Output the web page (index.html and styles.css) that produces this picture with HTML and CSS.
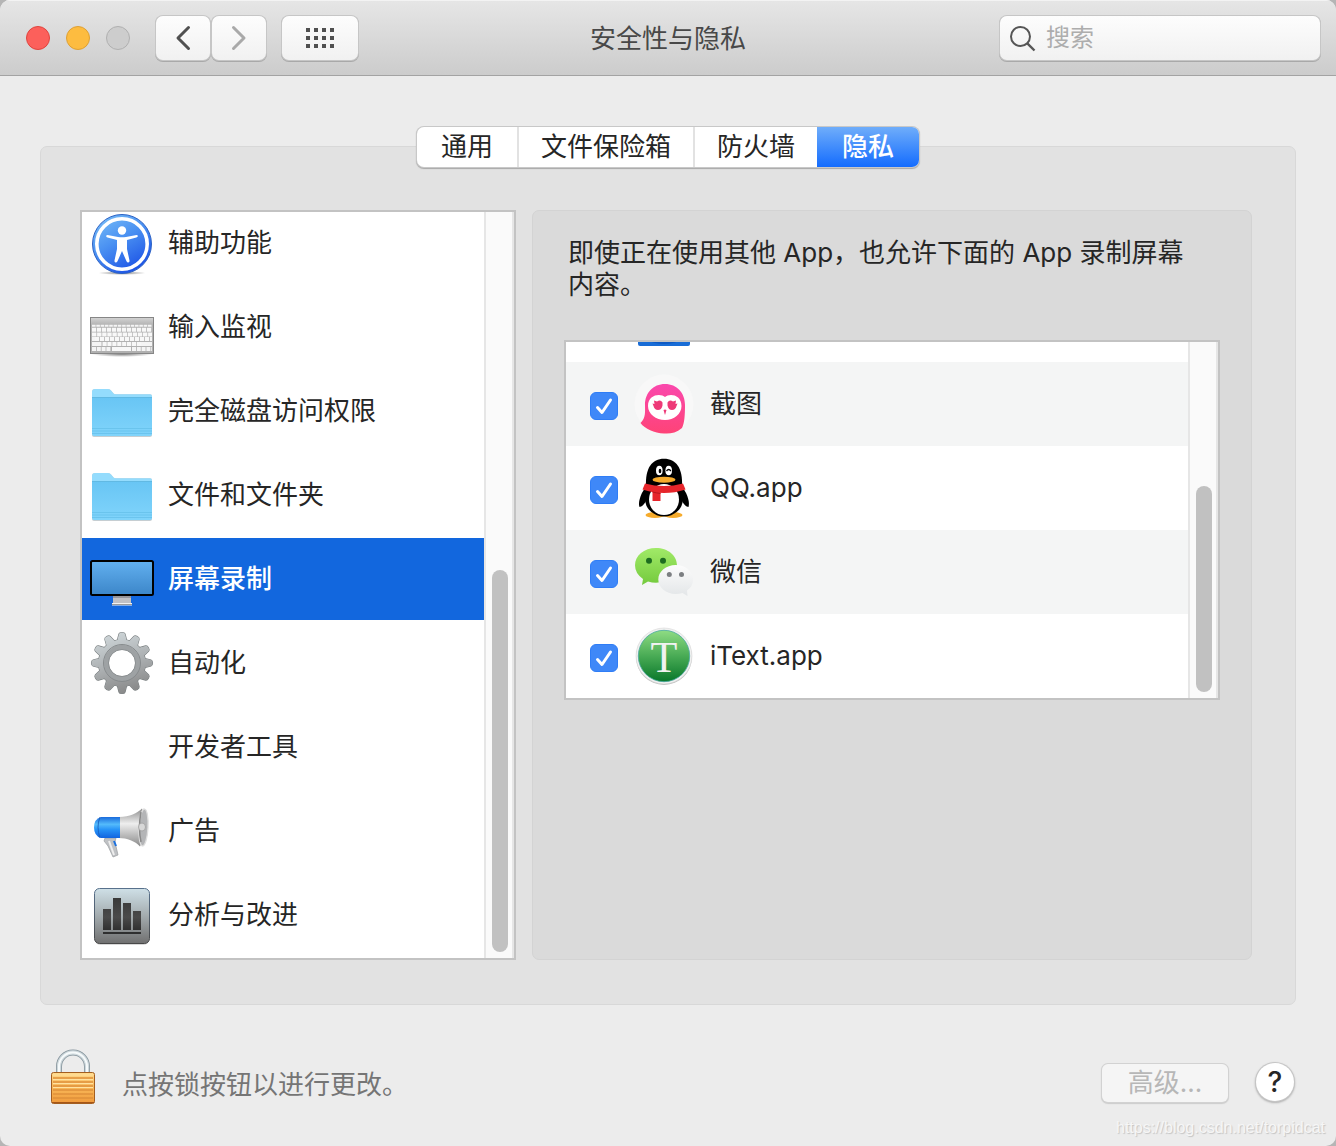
FILE: index.html
```html
<!DOCTYPE html>
<html lang="zh-CN">
<head>
<meta charset="utf-8">
<meta name="viewport" content="width=device-width, initial-scale=1">
<title>安全性与隐私</title>
<link rel="stylesheet" href="styles.css">
</head>
<body>
<div class="window">
  <header class="toolbar">
    <div class="toolbar-left">
      <div class="lights">
        <button class="light light-close" aria-label="关闭"></button>
        <button class="light light-min" aria-label="最小化"></button>
        <button class="light light-off" aria-label="缩放" disabled></button>
      </div>
      <div class="nav">
        <button class="tool" aria-label="后退"><svg width="54" height="44" viewBox="0 0 54 44"><path d="M32.500 11.500 22 22 32.500 32.500" fill="none" stroke="#505050" stroke-width="3" stroke-linecap="round" stroke-linejoin="round"/></svg></button>
        <button class="tool" aria-label="前进" disabled><svg width="54" height="44" viewBox="0 0 54 44"><path d="M21.500 11.500 32 22 21.500 32.500" fill="none" stroke="#a9a9a9" stroke-width="3" stroke-linecap="round" stroke-linejoin="round"/></svg></button>
      </div>
      <button class="tool tool-wide" aria-label="显示全部"><svg width="28" height="20" viewBox="0 0 28 20"><path d="M0 2h28M0 10h28M0 18h28" stroke="#505050" stroke-width="4" stroke-dasharray="4 4"/></svg></button>
    </div>
    <h1 class="title">安全性与隐私</h1>
    <label class="search">
      <svg width="26" height="26" viewBox="0 0 26 26" fill="none" stroke="#565656" stroke-width="2"><circle cx="10.500" cy="10.500" r="9.500"/><path d="M17.300 17.300 24.500 24.500" stroke-width="2.400"/></svg>
      <input type="search" placeholder="搜索" aria-label="搜索">
    </label>
  </header>

  <main class="content">
    <div class="tabs" role="tablist">
      <button class="tab" role="tab">通用</button>
      <button class="tab" role="tab">文件保险箱</button>
      <button class="tab" role="tab">防火墙</button>
      <button class="tab tab-active" role="tab" aria-selected="true">隐私</button>
    </div>

    <section class="panel">
      <div class="scrollbox categories">
        <ul class="category-list">
          <li class="category">
            <svg width="64" height="64" viewBox="0 0 64 64">
              <defs>
                <linearGradient id="acc" x1="0" y1="0" x2=".6" y2="1"><stop offset="0" stop-color="#7fc4f8"/><stop offset=".5" stop-color="#4b92f2"/><stop offset="1" stop-color="#1e55e6"/></linearGradient>
                <radialGradient id="shade"><stop offset="0" stop-color="#000" stop-opacity=".5"/><stop offset="1" stop-color="#000" stop-opacity="0"/></radialGradient>
              </defs>
              <ellipse cx="32" cy="62" rx="24" ry="2" fill="url(#shade)"/>
              <circle cx="32" cy="33" r="29.500" fill="url(#acc)" stroke="#2d62c4"/>
              <circle cx="32" cy="33" r="25.200" fill="none" stroke="#fff" stroke-width="3.600"/>
              <circle cx="32" cy="19.500" r="4.200" fill="#fff"/>
              <path d="M17.500 24 28 26q4 .7 8 0l10.500-2q1.500 0 1.300 1.300-.2 1-1.500 1.300L37 29v9l2.500 11.500q.2 1.800-1.200 2-1.200.1-1.800-1.300L32 40l-4.500 10.200q-.8 1.400-2 1.200-1.200-.4-1-1.900L27 38v-9l-9.500-2.500q-1.300-.5-1.300-1.300 0-1.200 1.300-1.200z" fill="#fff"/>
            </svg>
            <span>辅助功能</span>
          </li>
          <li class="category">
            <svg width="64" height="64" viewBox="0 0 64 64">
              <defs><linearGradient id="kb" x2="0" y2="1"><stop offset="0" stop-color="#d4d4d4"/><stop offset=".2" stop-color="#b4b4b4"/><stop offset="1" stop-color="#b0b0b0"/></linearGradient></defs>
              <ellipse cx="32" cy="59" rx="31" ry="3" fill="url(#shade)"/>
              <rect x=".5" y="22.500" width="63" height="36" fill="url(#kb)" stroke="#868686"/>
              <path d="M2 30.800h60" stroke="#f5f5f5" stroke-width="2" stroke-dasharray="3.600 .7"/>
              <path d="M2 34.700h60M5 44h55" stroke="#f8f8f8" stroke-width="4" stroke-dasharray="4.200 .8"/>
              <path d="M2 39.500h60" stroke="#f8f8f8" stroke-width="4" stroke-dasharray="4.400 .7"/>
              <path d="M2 44h3M60 44h2M2 49h9.500M51 49h11" stroke="#f5f5f5" stroke-width="4"/>
              <path d="M12.500 49H51" stroke="#f8f8f8" stroke-width="4" stroke-dasharray="4.200 .7"/>
              <path d="M2 54h19M42 54h20" stroke="#f5f5f5" stroke-width="4" stroke-dasharray="4 .8"/>
              <path d="M22 54h19" stroke="#f8f8f8" stroke-width="4"/>
            </svg>
            <span>输入监视</span>
          </li>
          <li class="category">
            <svg width="64" height="64" viewBox="0 0 64 64">
              <defs>
                <linearGradient id="fold" x2="0" y2="1"><stop offset="0" stop-color="#68c5f4"/><stop offset="1" stop-color="#80d4fb"/></linearGradient>
                <g id="folder">
                  <path d="M2 13q0-3 3-3h13q2 0 3.500 2l2 2.500q.8.700 2 .700H60q2 0 2 2V56q0 2-2 2H4q-2 0-2-2z" fill="#8e9ea6" opacity=".5"/>
                  <path d="M2 13q0-3 3-3h13q2 0 3.500 2l2 2.500q.8.700 2 .700H60q2 0 2 2V50H2z" fill="#94dcfd"/>
                  <path d="M2 18h60v37q0 2-2 2H4q-2 0-2-2z" fill="url(#fold)"/>
                  <path d="M2 18.500h60" stroke="#61b9e3"/>
                  <path d="M2 49.500h60M2 52h60M2 54.500h60" stroke="#63bfe9" opacity=".7"/>
                </g>
              </defs>
              <use href="#folder"/>
            </svg>
            <span>完全磁盘访问权限</span>
          </li>
          <li class="category">
            <svg width="64" height="64" viewBox="0 0 64 64"><use href="#folder"/></svg>
            <span>文件和文件夹</span>
          </li>
          <li class="category category-selected" aria-current="true">
            <svg width="64" height="64" viewBox="0 0 64 64">
              <defs><linearGradient id="scr" x2="0" y2="1"><stop offset="0" stop-color="#62b0ef"/><stop offset="1" stop-color="#3c86c9"/></linearGradient></defs>
              <path d="M23 48h18v8H23z" fill="#c0c0c4"/><path d="M23 49h18v2H23z" fill="#96969c"/>
              <path d="M22 56h20v2.500H22z" fill="#f2f2f2"/><path d="M22 57.500h20" stroke="#9a9a9a"/>
              <rect x="1" y="14" width="62" height="34" rx="1.500" fill="url(#scr)" stroke="#000" stroke-width="2"/>
            </svg>
            <span>屏幕录制</span>
          </li>
          <li class="category">
            <svg width="64" height="64" viewBox="0 0 64 64">
              <defs>
                <linearGradient id="gear" gradientUnits="userSpaceOnUse" x1="20" y1="0" x2="40" y2="64"><stop offset="0" stop-color="#d0d8db"/><stop offset=".5" stop-color="#adb1b3"/><stop offset="1" stop-color="#858585"/></linearGradient>
                <path id="tooth" d="M27 11 29 3q.4-1.500 3-1.500T35 3L37 11z"/>
                <g id="teeth"><use href="#tooth"/><use href="#tooth" transform="rotate(30 32 32)"/><use href="#tooth" transform="rotate(60 32 32)"/><use href="#tooth" transform="rotate(90 32 32)"/><use href="#tooth" transform="rotate(120 32 32)"/><use href="#tooth" transform="rotate(150 32 32)"/><use href="#tooth" transform="rotate(180 32 32)"/><use href="#tooth" transform="rotate(210 32 32)"/><use href="#tooth" transform="rotate(240 32 32)"/><use href="#tooth" transform="rotate(270 32 32)"/><use href="#tooth" transform="rotate(300 32 32)"/><use href="#tooth" transform="rotate(330 32 32)"/></g>
                <mask id="gearmask"><g fill="#fff"><use href="#teeth"/><circle cx="32" cy="32" r="23.500"/></g><circle cx="32" cy="32" r="13" fill="#000"/></mask>
              </defs>
              <g fill="none" stroke="#7b8082" stroke-width="1.200"><use href="#teeth"/><circle cx="32" cy="32" r="23.500"/></g>
              <rect width="64" height="64" fill="url(#gear)" mask="url(#gearmask)"/>
              <circle cx="32" cy="32" r="13" fill="#fff"/>
              <circle cx="32" cy="32" r="15.700" fill="none" stroke="#9ea2a4" stroke-width="4.500"/>
              <circle cx="32" cy="32" r="18.500" fill="none" stroke="#878b8d"/>
              <circle cx="32" cy="32" r="13.500" fill="none" stroke="#8b8f91"/>
            </svg>
            <span>自动化</span>
          </li>
          <li class="category">
            <svg width="64" height="64" viewBox="0 0 64 64" aria-hidden="true"></svg>
            <span>开发者工具</span>
          </li>
          <li class="category">
            <svg width="64" height="64" viewBox="0 0 64 64">
              <defs>
                <linearGradient id="mb" x2="0" y2="1"><stop offset="0" stop-color="#1a6bdc"/><stop offset=".35" stop-color="#54bbfb"/><stop offset=".6" stop-color="#2793f7"/><stop offset="1" stop-color="#1264df"/></linearGradient>
                <linearGradient id="ms" x2="0" y2="1"><stop offset="0" stop-color="#8d8d8d"/><stop offset=".4" stop-color="#eee"/><stop offset=".7" stop-color="#bbb"/><stop offset="1" stop-color="#8a8a8a"/></linearGradient>
              </defs>
              <path d="M15 39h11l-1 4 3 13-5 2-5-11-4-5z" fill="#bfc1c4" stroke="#9b9da0" stroke-width=".7"/>
              <path d="m19 42 5 14" stroke="#eee" stroke-width="2"/><path d="m24 42 2 5" stroke="#1970e0" stroke-width="2"/>
              <path d="M29 18c11 0 18-4 23-8.500q4 9 3.500 19T50 47.500C45 42 37 39 29 39z" fill="url(#ms)"/>
              <ellipse cx="53.500" cy="28.500" rx="4.500" ry="18.500" transform="rotate(3 53.500 28.500)" fill="#b4b5b7" stroke="#dedede" stroke-width="1.300"/>
              <path d="M51 13q-3 16 0 30" fill="none" stroke="#898989" stroke-width="1.500"/>
              <ellipse cx="52" cy="28" rx="3.500" ry="4" fill="#d8d8d8" stroke="#999" stroke-width=".7"/>
              <path d="M11 18h19v21H11q-7-2-7-10.500T11 18z" fill="url(#mb)"/>
              <path d="M10 18q-4 10 0 21" fill="none" stroke="#1759b8" stroke-width=".8"/>
            </svg>
            <span>广告</span>
          </li>
          <li class="category">
            <svg width="64" height="64" viewBox="0 0 64 64">
              <defs>
                <linearGradient id="an" x2="0" y2="1"><stop offset="0" stop-color="#cfe0e7"/><stop offset=".5" stop-color="#a3abae"/><stop offset="1" stop-color="#707070"/></linearGradient>
                <linearGradient id="bar" x2="0" y2="1"><stop offset="0" stop-color="#393939"/><stop offset=".6" stop-color="#4a4a4a"/><stop offset="1" stop-color="#303030"/></linearGradient>
                <linearGradient id="anb" x2="0" y2="1"><stop offset="0" stop-color="#58718c"/><stop offset="1" stop-color="#484848"/></linearGradient>
              </defs>
              <rect x="5" y="6" width="54" height="56" rx="5" fill="#000" opacity=".15"/>
              <rect x="4.500" y="5.500" width="55" height="55" rx="5" fill="url(#an)" stroke="url(#anb)"/>
              <path d="M13 26h8v21h-8zM23 15h8v32h-8zM33 20h8v27h-8zM43 28h8v19h-8z" fill="url(#bar)"/>
              <path d="M13 50h38" stroke="#2f2f2f" stroke-width="2"/>
            </svg>
            <span>分析与改进</span>
          </li>
        </ul>
        <div class="track"><div class="thumb" style="height:52%"></div></div>
      </div>

      <div class="detail">
        <p class="explain">即使正在使用其他 App，也允许下面的 App 录制屏幕内容。</p>
        <div class="scrollbox apps">
          <ul class="app-list">
            <li class="app"><svg class="app-first" width="60" height="60" viewBox="0 0 60 60"><rect x="4" y="4" width="52" height="52" rx="2" fill="#186cd6"/><ellipse cx="30" cy="50" rx="14" ry="4" fill="#0d5ac4"/></svg></li>
            <li class="app"><label class="app-label">
              <span class="check"><input type="checkbox" checked><svg width="28" height="28" viewBox="0 0 28 28"><path d="M7.500 15.500 12 20.500 20.500 8"/></svg></span>
              <svg width="60" height="60" viewBox="0 0 60 60">
                <defs><linearGradient id="pk" x2="0" y2="1"><stop offset="0" stop-color="#fa48ad"/><stop offset="1" stop-color="#fe4377"/></linearGradient></defs>
                <circle cx="30" cy="30" r="29.500" fill="#f8f8f8"/>
                <path d="M31 10c12 0 20 9 20 21 0 10-.5 18-3 23-6 5-12 6-18 5.500C20 59 11 55 6.500 49 12 44 11 37 11 31c0-12 8-21 20-21z" fill="url(#pk)"/>
                <path d="M31 23c4-4 16.500-3 16.500 9 0 8-7.500 14-16.500 14s-17-6-17-14c0-12 13-13 17-9z" fill="#fff"/>
                <g fill="#ee3a78"><path d="M20 26.500l3 1q3.500-2.500 5.500 1v3q-1 4.500-4.500 4.500t-4.500-4l-1-2.500 2 .500zM42 26.500l-3 1q-3.500-2.500-5.500 1v3q1 4.500 4.500 4.500t4.500-4l1-2.500-2 .500z"/><path d="M29.500 36q1.500-1 3 0L31 41z"/></g>
              </svg>
              <span>截图</span>
            </label></li>
            <li class="app"><label class="app-label">
              <span class="check"><input type="checkbox" checked><svg width="28" height="28" viewBox="0 0 28 28"><path d="M7.500 15.500 12 20.500 20.500 8"/></svg></span>
              <svg width="60" height="60" viewBox="0 0 60 60">
                <g fill="#f6ab2c"><ellipse cx="21" cy="57" rx="9.500" ry="3"/><ellipse cx="39" cy="57" rx="9.500" ry="3"/></g>
                <path d="M11 30C6 37 4 45 5.500 49c2 0 5-3 6.500-6l8-10zM49 30c5 7 7 15 5.500 19-2 0-5-3-6.500-6l-8-10z" fill="#000"/>
                <ellipse cx="30" cy="41" rx="19" ry="17.500" fill="#000"/>
                <path d="M12 29C11 10 18 .800 30 .800S49 10 48 29z" fill="#000"/>
                <ellipse cx="30" cy="41.500" rx="15" ry="15.500" fill="#fff"/>
                <path d="M11 25.500q19 5 38 0L51.500 31.500Q41 35 30 35T8.500 31.500z" fill="#e6252b"/>
                <path d="M18.500 33h8v10h-8z" fill="#e6252b"/><path d="M18.500 34q4 1 8 1.500" stroke="#b51820" fill="none"/>
                <g fill="#fff"><ellipse cx="25.300" cy="12.500" rx="3.300" ry="4.800"/><ellipse cx="34.700" cy="12.500" rx="3.300" ry="4.800"/></g>
                <ellipse cx="26" cy="13" rx="1.300" ry="2.300"/><path d="M32.500 13q2.200-3 4.400 0" stroke="#000" fill="none" stroke-width="1.300"/>
                <ellipse cx="30" cy="21.700" rx="11.500" ry="3" fill="#f6ab2c"/>
              </svg>
              <span>QQ.app</span>
            </label></li>
            <li class="app"><label class="app-label">
              <span class="check"><input type="checkbox" checked><svg width="28" height="28" viewBox="0 0 28 28"><path d="M7.500 15.500 12 20.500 20.500 8"/></svg></span>
              <svg width="60" height="60" viewBox="0 0 60 60">
                <defs>
                  <linearGradient id="wg" x2="0" y2="1"><stop offset="0" stop-color="#a1ea68"/><stop offset="1" stop-color="#74ca3d"/></linearGradient>
                  <linearGradient id="ww" x2="0" y2="1"><stop offset="0" stop-color="#fcfcfc"/><stop offset="1" stop-color="#e3e6e8"/></linearGradient>
                </defs>
                <path d="M22 6c12 0 21 7.500 21 17.300S34 40.700 22 40.700q-4 0-8-1.200L8 43l1-6Q1 31.500 1 23.300C1 13.500 10 6 22 6z" fill="url(#wg)"/>
                <g fill="#1d6c20"><circle cx="15" cy="18.700" r="3"/><circle cx="29" cy="18.700" r="3"/></g>
                <path d="M41.700 23C51 23 59 29 59 37.500q0 7-6 11l.5 5.500-5-3Q45 52 41.700 52C32 52 24.300 45.500 24.300 37.500S32 23 41.700 23z" fill="url(#ww)"/>
                <g fill="#7c7f82"><circle cx="35.300" cy="32.500" r="2.500"/><circle cx="47.500" cy="32.500" r="2.500"/></g>
              </svg>
              <span>微信</span>
            </label></li>
            <li class="app"><label class="app-label">
              <span class="check"><input type="checkbox" checked><svg width="28" height="28" viewBox="0 0 28 28"><path d="M7.500 15.500 12 20.500 20.500 8"/></svg></span>
              <svg width="60" height="60" viewBox="0 0 60 60">
                <defs><linearGradient id="it" x2="0" y2="1"><stop offset="0" stop-color="#8fdc83"/><stop offset=".5" stop-color="#49ab55"/><stop offset="1" stop-color="#08772a"/></linearGradient></defs>
                <circle cx="30" cy="31" r="28" fill="#bcbcbc"/><circle cx="30" cy="30" r="28" fill="#f0f0f0" stroke="#d8d8d8" stroke-width=".6"/>
                <circle cx="30" cy="30" r="25.700" fill="url(#it)" stroke="#47a8a0" stroke-width=".8"/>
                <text class="logo-letter" x="30" y="46" text-anchor="middle">T</text>
              </svg>
              <span>iText.app</span>
            </label></li>
          </ul>
          <div class="track"><div class="thumb" style="height:60%"></div></div>
        </div>
      </div>
    </section>
  </main>

  <footer class="footer">
    <button class="lock" aria-label="锁">
      <svg width="46" height="56" viewBox="0 0 46 56">
        <defs>
          <linearGradient id="lk" x2="0" y2="1"><stop offset="0" stop-color="#ffd98a"/><stop offset=".5" stop-color="#f8b758"/><stop offset="1" stop-color="#f0993a"/></linearGradient>
        </defs>
        <path d="M9 26V18.500a14 14 0 0 1 28 0V26" fill="none" stroke="#84939b" stroke-width="6"/>
        <path d="M9 26V18.500a14 14 0 0 1 28 0V26" fill="none" stroke="#cdd7db" stroke-width="4.400"/>
        <path d="M9 26V18.500a14 14 0 0 1 28 0V26" fill="none" stroke="#f6fafb" stroke-width="2"/>
        <rect x="1.500" y="24.500" width="43" height="31" rx="2" fill="url(#lk)" stroke="#a35e20"/>
        <path d="M3 30h40M3 34h40M3 38h40M3 42h40M3 46h40M3 50h40" stroke="#e0913b" stroke-width="1.300"/>
        <path d="M3 27h40M3 31.500h40M3 35.500h40M3 39.500h40" stroke="#ffe2a0"/>
        <path d="M2 54.500h42" stroke="#a55517"/>
      </svg>
    </button>
    <p class="hint">点按锁按钮以进行更改。</p>
    <button class="advanced" disabled>高级...</button>
    <button class="help" aria-label="帮助">?</button>
    <span class="watermark">https://blog.csdn.net/torpidcat</span>
  </footer>
</div>
</body>
</html>
```
FILE: styles.css
```css
* { box-sizing: border-box; }

body {
  margin: 0;
  background: #b5b5b5;
  color: #262626;
  font: 26px/32px Inter, "Noto Sans CJK SC", sans-serif;
}

button, input { font: inherit; color: inherit; }
button { margin: 0; padding: 0; border: 0; background: none; }
svg { display: block; flex: none; }
ul { margin: 0; padding: 0; list-style: none; }
p, h1 { margin: 0; }

.window {
  display: flex;
  flex-direction: column;
  min-height: 100vh;
  border-radius: 10px;
  background: #ececec;
  overflow: hidden;
}

.toolbar {
  display: grid;
  grid-template-columns: 1fr auto 1fr;
  align-items: center;
  height: 76px;
  padding: 0 16px;
  border-bottom: 1px solid #a3a3a3;
  background: linear-gradient(#e6e6e6, #cccccc);
  box-shadow: inset 0 1px #f3f3f3;
}
.toolbar-left, .lights, .nav { display: flex; align-items: center; }
.toolbar-left { padding-left: 10px; }
.lights { gap: 16px; margin-right: 26px; }
.light { width: 24px; height: 24px; border: 1px solid; border-radius: 50%; }
.light-close { background: #fc605b; border-color: #e0443e; }
.light-min { background: #fdbc40; border-color: #dea034; }
.light-off { background: #cdcdcd; border-color: #b0b0b0; }
.nav { gap: 2px; margin-right: 16px; }
.tool, .search {
  display: flex;
  align-items: center;
  justify-content: center;
  height: 44px;
  border-radius: 7px;
  background: linear-gradient(#fdfdfd, #f1f1f1);
  box-shadow: 0 0 0 1px #c6c6c6, 0 1px 0 1px #a9a9a9;
}
.tool-wide { width: 76px; }
.title { padding-top: 2px; color: #484848; font-size: 26px; font-weight: 400; }
.search {
  justify-self: end;
  justify-content: flex-start;
  gap: 10px;
  width: 320px;
  padding: 2px 10px 0;
}
.search input {
  flex: 1;
  min-width: 0;
  padding: 0 0 2px;
  border: 0;
  outline: 0;
  background: none;
  font-size: 24px;
}
.search input::placeholder { color: #adadad; }

.content { flex: 1; padding: 51px 40px 0; }
.tabs {
  position: relative;
  display: flex;
  width: max-content;
  margin: 0 auto -21px;
  border-radius: 7px;
  background: #fff;
  box-shadow: 0 0 0 1px #c8c8c8, 0 1px 1px 1px #a8a8a8;
}
.tab {
  min-width: 102px;
  height: 40px;
  padding: 0 22px;
  border-right: 2px solid #e2e2e2;
}
.tab:nth-child(3) { border-right: 0; }
.tab-active {
  border: 0;
  border-radius: 0 7px 7px 0;
  background: linear-gradient(#6fadfa, #146cfe);
  color: #fff;
  font-weight: 500;
}

.panel {
  display: flex;
  align-items: stretch;
  gap: 16px;
  padding: 63px 43px 44px 39px;
  border: 1px solid #d8d8d8;
  border-radius: 7px;
  background: #e2e2e2;
}
.scrollbox {
  display: flex;
  border: 2px solid #c3c3c3;
  background: #fff;
  overflow: hidden;
}
.track {
  display: flex;
  flex: none;
  align-items: flex-end;
  width: 30px;
  padding: 6px 4px 6px 6px;
  border: solid #e6e6e6;
  border-width: 0 2px;
  background: #fafafa;
}
.thumb { width: 16px; border-radius: 8px; background: #c1c1c1; }

/* Both lists rest scrolled to the end, so their first row is cut off. */
.categories { flex: 0 0 436px; }
.category-list {
  display: flex;
  flex: 1;
  flex-direction: column;
  gap: 2px;
  margin-top: -10px;
  padding-bottom: 2px;
}
.category {
  display: flex;
  align-items: center;
  gap: 14px;
  height: 82px;
  padding-left: 8px;
}
.category-selected { background: #1267de; color: #fff; font-weight: 500; }

.detail {
  flex: 1;
  min-width: 0;
  padding: 26px 31px;
  border: 1px solid #d3d3d3;
  border-radius: 7px;
  background: #dadada;
}
.explain { padding: 0 28px 0 4px; margin-bottom: 39px; }
.app-list { flex: 1; margin-top: -64px; }
.app { height: 84px; padding: 12px 24px; }
.app:nth-child(even) { background: #f4f5f5; }
.app-first { margin-left: 44px; }
.app-label { display: flex; align-items: center; gap: 16px; }

.check { display: grid; padding-top: 4px; }
.check input, .check svg { grid-area: 1 / 1; }
.check input {
  width: 28px;
  height: 28px;
  margin: 0;
  appearance: none;
  border: 1px solid #2f7df6;
  border-radius: 6px;
  background: #3f88f8;
}
.check svg {
  z-index: 1;
  fill: none;
  stroke: #fff;
  stroke-width: 3;
  stroke-linecap: round;
  stroke-linejoin: round;
  pointer-events: none;
}
.logo-letter { fill: #f0f2f0; font: 44px "Liberation Serif", serif; }

.footer {
  position: relative;
  display: flex;
  align-items: flex-end;
  padding: 43px 41px 42px 50px;
}
.hint { flex: 1; margin-left: 26px; color: #757575; line-height: 38px; }
.advanced {
  width: 126px;
  height: 38px;
  margin: 0 28px 2px 0;
  border-radius: 6px;
  background: #f5f5f5;
  box-shadow: 0 0 0 1px #d2d2d2, 0 1px 1px 1px #cccccc;
  color: #b7b7b7;
}
.help {
  width: 38px;
  height: 38px;
  margin: 0 1px 3px 0;
  border-radius: 50%;
  background: #fff;
  box-shadow: 0 0 0 1px #c6c6c6, 0 1px 2px 1px #b0b0b0;
  font-size: 28px;
  font-weight: 500;
}
.watermark {
  position: absolute;
  right: 11px;
  bottom: 8px;
  color: #f6f6f6;
  font: 16px/20px "Liberation Sans", sans-serif;
  text-shadow: 1px 1px 1px #c4c4c4;
}
```
